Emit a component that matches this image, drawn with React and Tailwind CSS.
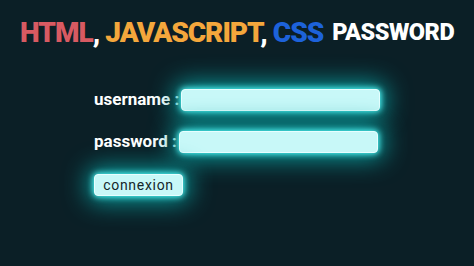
export default function App() {
  const glow = 'shadow-[0_0_6px_1px_#5ff,0_0_24px_6px_#0a9c9c]'

  return (
    <div className="w-[474px] h-[266px] bg-[#0b1f26] overflow-hidden font-['Roboto',sans-serif]">
      {/* Title */}
      <div className="flex items-start pl-[20px] pt-[17px] h-[62px] font-black">
        <h1 className="text-[28px] leading-[32px] tracking-[-1px] whitespace-nowrap">
          <span className="text-[#d85a62]">HTML</span>
          <span className="text-white">, </span>
          <span className="text-[#f4a73c]">JAVASCRIPT</span>
          <span className="text-white">, </span>
          <span className="text-[#1d62da]">CSS</span>
        </h1>
        <span className="ml-[9px] mt-[3px] text-[23.5px] leading-[24px] tracking-[-0.5px] text-white">PASSWORD</span>
      </div>

      {/* Form */}
      <form className="flex flex-col gap-[20px] pl-[94px] pt-[27px]">
        <label className="flex items-center h-[22px] text-white font-bold text-[17px]">
          <span className="mr-[2px]">username :</span>
          <input className={`w-[199px] h-[22px] rounded-[4px] bg-[#c8f8f8] border border-[#e6ffff] outline-none ${glow}`} />
        </label>
        <label className="flex items-center h-[22px] text-white font-bold text-[17px]">
          <span className="mr-[2px]">password :</span>
          <input type="password" className={`w-[199px] h-[22px] rounded-[4px] bg-[#c8f8f8] border border-[#e6ffff] outline-none ${glow}`} />
        </label>
        <div>
          <button
            type="button"
            className={`w-[89px] h-[22px] rounded-[4px] bg-[#c8f8f8] border border-[#e6ffff] text-[#14262a] text-[14px] tracking-wider ${glow}`}
          >
            connexion
          </button>
        </div>
      </form>
    </div>
  )
}
